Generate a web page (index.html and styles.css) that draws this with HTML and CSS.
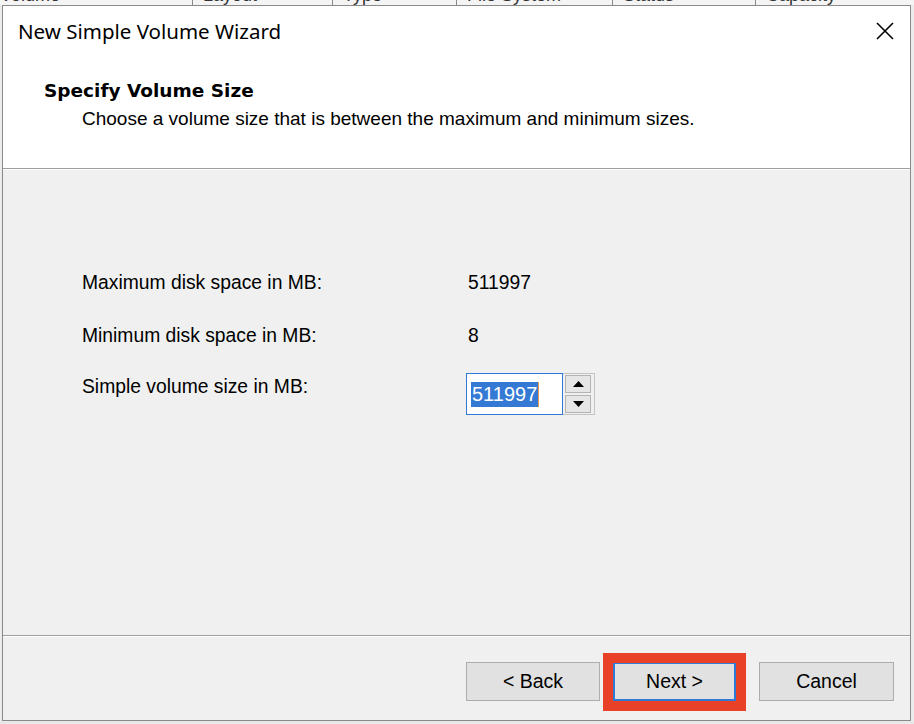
FILE: index.html
```html
<!DOCTYPE html>
<html lang="en">
<head>
<meta charset="utf-8">
<title>New Simple Volume Wizard</title>
<link rel="stylesheet" href="styles.css">
</head>
<body>
<div class="bg-header">
  <div class="col c1"><span>Volume</span></div>
  <div class="col c2"><span>Layout</span></div>
  <div class="col c3"><span>Type</span></div>
  <div class="col c4"><span>File System</span></div>
  <div class="col c5"><span>Status</span></div>
  <div class="col c6"><span>Capacity</span></div>
</div>
<div class="dialog">
  <div class="top">
    <div class="titlebar">
      <span class="title">New Simple Volume Wizard</span>
      <svg class="close" width="18" height="18" viewBox="0 0 18 18"><path d="M1 1L17 17M17 1L1 17" stroke="#000" stroke-width="1.6" fill="none"/></svg>
    </div>
    <div class="header">
      <div class="h-title">Specify Volume Size</div>
      <div class="h-sub">Choose a volume size that is between the maximum and minimum sizes.</div>
    </div>
  </div>
  <div class="content">
    <div class="row r1"><span class="label">Maximum disk space in MB:</span><span class="value">511997</span></div>
    <div class="row r2"><span class="label">Minimum disk space in MB:</span><span class="value">8</span></div>
    <div class="row r3"><span class="label">Simple volume size in MB:</span>
      <div class="spinbox">
        <div class="field"><span class="sel">511997</span><span class="caret"></span></div>
        <div class="spin">
          <div class="sbtn"><svg width="11" height="6" viewBox="0 0 11 6"><path d="M0 6L5.5 0L11 6Z" fill="#000"/></svg></div>
          <div class="sbtn"><svg width="11" height="6" viewBox="0 0 11 6"><path d="M0 0L5.5 6L11 0Z" fill="#000"/></svg></div>
        </div>
      </div>
    </div>
  </div>
  <div class="buttons">
    <div class="btn back">&lt; Back</div>
    <div class="btn next">Next &gt;<span class="mark"></span></div>
    <div class="btn cancel">Cancel</div>
  </div>
</div>
<div class="bg-bottom"></div>
</body>
</html>
```
FILE: styles.css
```css
html, body {
  margin: 0;
  padding: 0;
}
body {
  width: 914px;
  height: 724px;
  overflow: hidden;
  background: #ececec;
  font-family: "Liberation Sans", Arial, sans-serif;
  color: #000;
}
.bg-header {
  height: 5px;
  display: flex;
  background: #f4f4f4;
  overflow: hidden;
}
.col {
  height: 5px;
  border-right: 1px solid #8a8a8a;
  overflow: hidden;
  font-size: 18px;
  color: #333;
  padding-left: 10px;
  box-sizing: border-box;
}
.col span {
  display: block;
  margin-top: -14px;
  line-height: 18px;
}
.c1 { width: 193px; padding-left: 0; }
.c2 { width: 140px; }
.c3 { width: 124px; }
.c4 { width: 156px; }
.c5 { width: 143px; }
.c6 { width: 158px; border-right: 0; }

.dialog {
  margin-left: 2px;
  width: 909px;
  height: 716px;
  box-sizing: border-box;
  border: 1px solid #8a8a8a;
  background: #f0f0f0;
  display: flex;
  flex-direction: column;
}
.top {
  background: #fff;
  height: 162px;
  border-bottom: 1px solid #a0a0a0;
  box-shadow: 0 1px 0 #fff;
  flex: none;
}
.titlebar {
  height: 50px;
  display: flex;
  align-items: center;
  justify-content: space-between;
  padding-left: 15px;
  padding-right: 16px;
}
.title {
  font-family: "Noto Sans", sans-serif;
  font-size: 20.5px;
}
.close {
  display: block;
}
.header {
  padding-left: 41px;
  padding-top: 24px;
}
.h-title {
  font-family: "DejaVu Sans", sans-serif;
  font-weight: bold;
  font-size: 18.5px;
  line-height: 22px;
}
.h-sub {
  font-size: 19px;
  line-height: 24px;
  margin-top: 5px;
  padding-left: 38px;
}
.content {
  flex: 1;
  padding-top: 102px;
  padding-left: 79px;
  border-bottom: 1px solid #a0a0a0;
  box-shadow: 0 1px 0 #fff;
}
.row {
  display: flex;
  align-items: flex-start;
  font-size: 19.3px;
  line-height: 24px;
}
.label {
  width: 386px;
  flex: none;
}
.r2 { margin-top: 29px; }
.r3 { margin-top: 25px; }
.r3 .label { margin-top: 2px; }
.spinbox {
  display: flex;
  margin-left: -2px;
  height: 42px;
}
.field {
  width: 97px;
  height: 42px;
  box-sizing: border-box;
  border: 1px solid #2f7ad6;
  background: #fff;
  display: flex;
  align-items: center;
  padding-left: 4px;
}
.sel {
  background: #3479d4;
  color: #fff;
  font-size: 20px;
  line-height: 25px;
  padding: 0 1px;
}
.caret {
  width: 1px;
  height: 25px;
  background: #e89a4a;
}
.spin {
  width: 32px;
  height: 42px;
  box-sizing: border-box;
  border: 1px solid #c4c4c4;
  border-left: 0;
  background: #f0f0f0;
  display: flex;
  flex-direction: column;
  justify-content: space-between;
  padding: 1px 3px 1px 2px;
}
.sbtn {
  height: 18px;
  box-sizing: border-box;
  border: 1px solid #b4b4b4;
  background: #e6e6e6;
  display: flex;
  align-items: center;
  justify-content: center;
}
.sbtn svg { display: block; }
.buttons {
  flex: none;
  height: 84px;
  display: flex;
  justify-content: flex-end;
  align-items: flex-start;
  padding-top: 26px;
  padding-right: 16px;
  box-sizing: border-box;
}
.btn {
  height: 39px;
  box-sizing: border-box;
  border: 1px solid #adadad;
  background: #e1e1e1;
  font-size: 19.5px;
  display: flex;
  align-items: center;
  justify-content: center;
  position: relative;
}
.back { width: 134px; }
.next {
  width: 123px;
  margin-left: 13px;
  border: 2px solid #2f7ad6;
}
.cancel {
  width: 135px;
  margin-left: 23px;
}
.mark {
  position: absolute;
  left: -12px;
  top: -11px;
  right: -12px;
  bottom: -12px;
  border: 10px solid #e84128;
}
.bg-bottom {
  height: 3px;
  background: #e8e8e8;
}
```
